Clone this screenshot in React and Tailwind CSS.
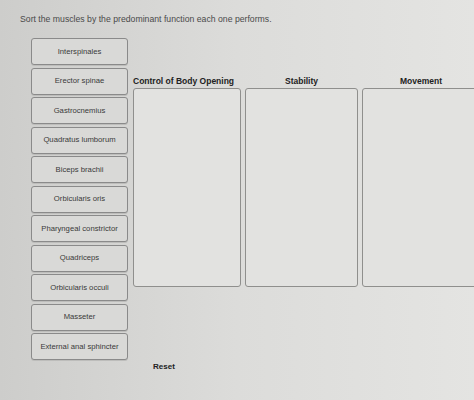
import React from "react";

const muscles = [
  "Interspinales",
  "Erector spinae",
  "Gastrocnemius",
  "Quadratus lumborum",
  "Biceps brachii",
  "Orbicularis oris",
  "Pharyngeal constrictor",
  "Quadriceps",
  "Orbicularis occuli",
  "Masseter",
  "External anal sphincter",
];

const buckets = [
  { name: "Control of Body Opening", width: "w-[108px]", align: "text-left" },
  { name: "Stability", width: "w-[113px]", align: "text-center" },
  { name: "Movement", width: "w-[118px]", align: "text-center" },
];

export default function App() {
  return (
    <div
      className="w-[474px] h-[400px] overflow-hidden bg-gradient-to-r from-[#cdcdcb] via-[#dcdcda] to-[#e4e4e2] text-[#333]"
      style={{ fontFamily: '"Liberation Sans", Arial, sans-serif' }}
    >
      {/* Prompt */}
      <p className="pt-[14px] pl-[20px] text-[8.7px] leading-[11px] text-[#4a4a4a]">
        Sort the muscles by the predominant function each one performs.
      </p>

      <div className="flex mt-[13px]">
        {/* Draggable items */}
        <div className="flex flex-col gap-[2.5px] pl-[31px] w-[128px] shrink-0">
          {muscles.map((m) => (
            <div
              key={m}
              className="h-[27px] flex items-center justify-center rounded-[3px] border border-[#8a8a8a] bg-[#d9d9d7] text-[7.7px] text-[#3a3a3a] shadow-[0_1px_0_#bdbdbb]"
            >
              {m}
            </div>
          ))}
        </div>

        {/* Drop zones */}
        <div className="flex flex-col pl-[5px]">
          <div className="flex gap-[4px] pt-[38px]">
            {buckets.map((b) => (
              <div key={b.name} className={`${b.width} shrink-0`}>
                <div
                  className={`${b.align} text-[8.5px] leading-[10px] font-bold text-[#222] mb-[2px]`}
                >
                  {b.name}
                </div>
                <div className="h-[199px] rounded-[3px] border border-[#8f8f8d] bg-[#e2e2e0]" />
              </div>
            ))}
          </div>
          <div className="mt-[74px] ml-[20px] text-[8px] font-bold text-[#222]">
            Reset
          </div>
        </div>
      </div>
    </div>
  );
}
